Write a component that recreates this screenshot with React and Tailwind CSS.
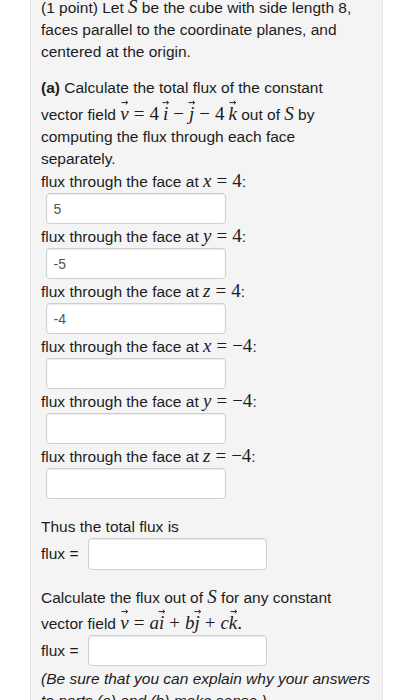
import React from 'react'

const serif = "font-['Liberation_Serif','Times_New_Roman',serif]"

function M({ children, italic }) {
  return (
    <span className={`${serif} text-[19px] leading-none ${italic ? 'italic' : ''}`}>{children}</span>
  )
}

function Op({ children }) {
  return <span className={`${serif} text-[19px] leading-none mx-[5px]`}>{children}</span>
}

function Vec({ children, gap }) {
  return (
    <span className={`relative inline-block ${serif} italic text-[19px] leading-none ${gap ? 'ml-[4px]' : ''}`}>
      {children}
      <svg className="absolute left-[60%] -translate-x-1/2 top-[-4px]" width="8" height="5" viewBox="0 0 8 5">
        <path d="M0.5 2.6h6.2M4.8 0.8l1.9 1.8-1.9 1.8" stroke="#222" strokeWidth="1" fill="none" />
      </svg>
    </span>
  )
}

function Answer({ value }) {
  return (
    <div className="ml-[4.5px] w-[180px] h-[31px] mb-[2px] bg-white border border-[#cfcfcf] rounded-[4px] shadow-[inset_0_1px_1px_rgba(0,0,0,0.08)] flex items-center px-[7px] text-[14px] text-[#555]">
      {value}
    </div>
  )
}

function FaceRow({ v, n, value }) {
  return (
    <div>
      <div className="h-[22px]">
        flux through the face at <M italic>{v}</M><Op>=</Op><M>{n}</M>:
      </div>
      <Answer value={value} />
    </div>
  )
}

export default function App() {
  const faces = [
    { v: 'x', n: '4', value: '5' },
    { v: 'y', n: '4', value: '-5' },
    { v: 'z', n: '4', value: '-4' },
    { v: 'x', n: '\u22124', value: '' },
    { v: 'y', n: '\u22124', value: '' },
    { v: 'z', n: '\u22124', value: '' },
  ]

  return (
    <div className="h-[700px] bg-white overflow-hidden font-['Liberation_Sans',Arial,sans-serif] text-[15.5px] text-[#1c1c1c]">
      <div className="ml-[30px] w-[353px] -mt-[14px] bg-[#f4f4f4] border border-[#e4e4e4] pl-[10px] pr-[4px] pt-[10px] pb-10 leading-[22px]">
        <div>(1 point) Let <M italic>S</M> be the cube with side length 8,</div>
        <div>faces parallel to the coordinate planes, and</div>
        <div>centered at the origin.</div>

        <div className="mt-[14px]"><span className="font-bold">(a)</span> Calculate the total flux of the constant</div>
        <div className="pt-[5px] whitespace-nowrap">
          vector field <Vec>v</Vec><Op>=</Op><M>4</M><Vec gap>i</Vec><Op>−</Op><Vec>j</Vec><Op>−</Op><M>4</M><Vec gap>k</Vec> out of <M italic>S</M> by
        </div>
        <div>computing the flux through each face</div>
        <div className="mb-[1px]">separately.</div>

        {faces.map((f, i) => (
          <FaceRow key={i} {...f} />
        ))}

        <div className="mt-[17px]">Thus the total flux is</div>
        <div className="flex items-center">
          <span className="w-[47px]">flux =</span>
          <div className="w-[179px] h-[32px] bg-white border border-[#cfcfcf] rounded-[4px] shadow-[inset_0_1px_1px_rgba(0,0,0,0.08)]" />
        </div>

        <div className="mt-[17px]">Calculate the flux out of <M italic>S</M> for any constant</div>
        <div className="pt-[4px] whitespace-nowrap">
          vector field <Vec>v</Vec><Op>=</Op><M italic>a</M><Vec>i</Vec><Op>+</Op><M italic>b</M><Vec>j</Vec><Op>+</Op><M italic>c</M><Vec>k</Vec><M>.</M>
        </div>
        <div className="flex items-center">
          <span className="w-[47px]">flux =</span>
          <div className="w-[179px] h-[31px] bg-white border border-[#cfcfcf] rounded-[4px] shadow-[inset_0_1px_1px_rgba(0,0,0,0.08)]" />
        </div>
        <div className="mt-[2px] italic whitespace-nowrap">(Be sure that you can explain why your answers</div>
        <div className="italic">to parts (a) and (b) make sense.)</div>
      </div>
    </div>
  )
}
